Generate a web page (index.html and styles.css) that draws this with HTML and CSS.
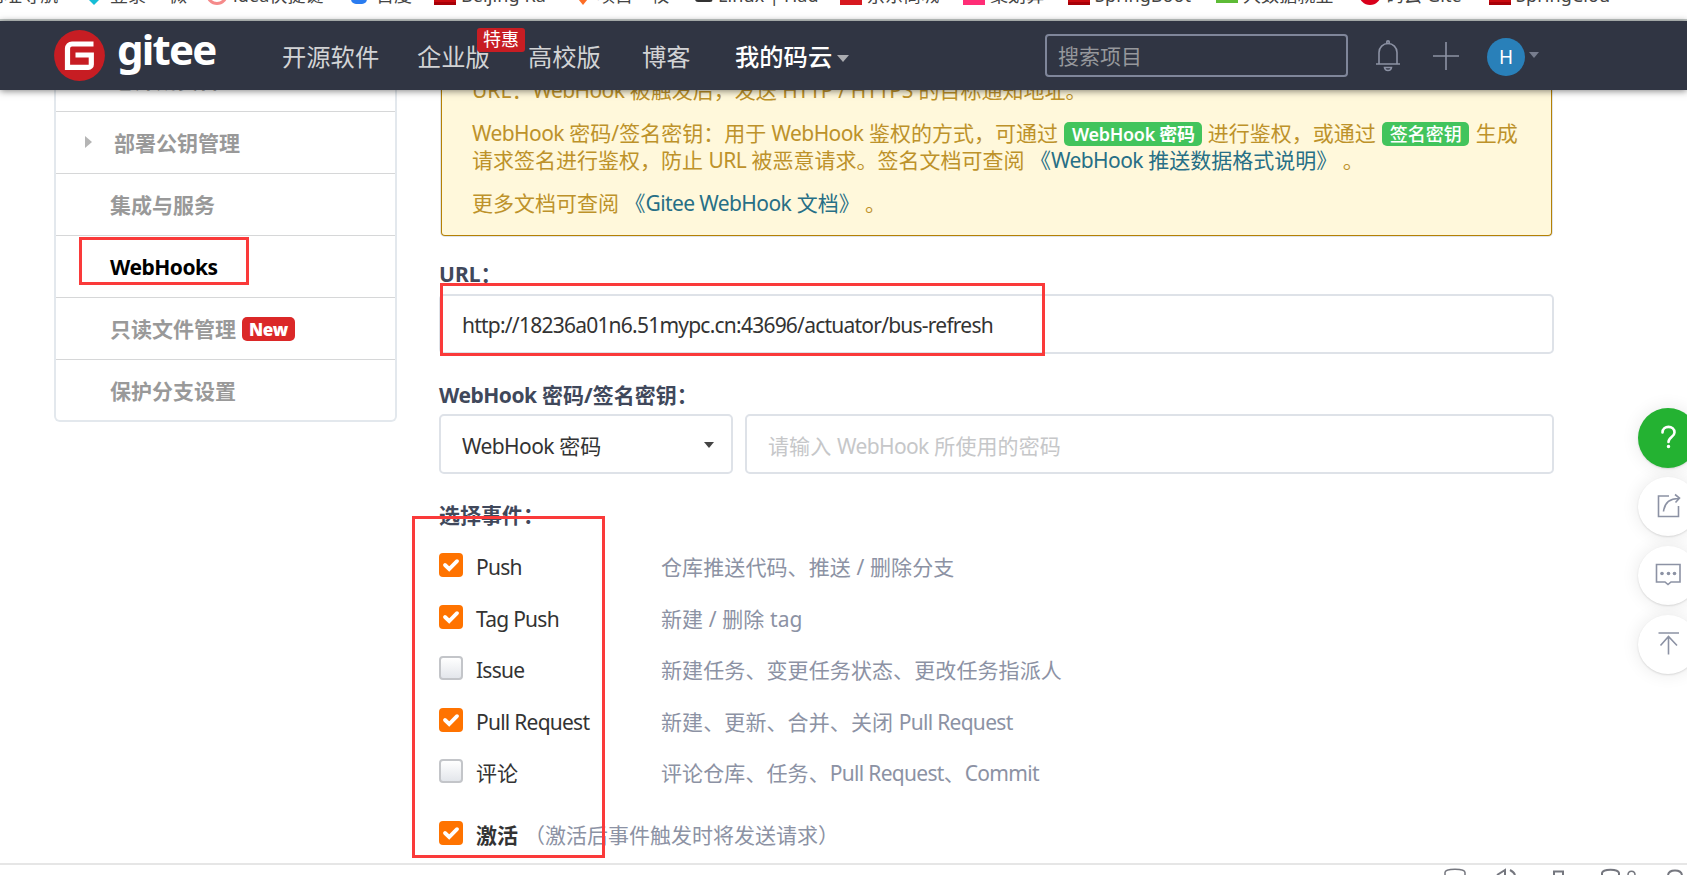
FILE: index.html
```html
<!DOCTYPE html>
<html lang="zh-CN">
<head>
<meta charset="utf-8">
<title>WebHooks - Gitee</title>
<link rel="stylesheet" href="styles.css">
</head>
<body>
<div class="bookmarks">
  <span class="bm"><span>网址导航</span></span>
  <span class="bm"><i class="fav drop"></i><span>登录 一微</span></span>
  <span class="bm"><i class="fav ring"></i><span>idea快捷键</span></span>
  <span class="bm"><i class="fav blue"></i><span>百度</span></span>
  <span class="bm"><i class="fav red"></i><span>Beijing Ra</span></span>
  <span class="bm"><i class="fav fox"></i><span>项目一校</span></span>
  <span class="bm"><i class="fav ink"></i><span>Linux | Had</span></span>
  <span class="bm"><i class="fav jd"></i><span>京东商城</span></span>
  <span class="bm"><i class="fav pink"></i><span>聚划算</span></span>
  <span class="bm"><i class="fav red"></i><span>SpringBoot</span></span>
  <span class="bm"><i class="fav green"></i><span>大数据就业</span></span>
  <span class="bm"><i class="fav round"></i><span>码云 Gite</span></span>
  <span class="bm"><i class="fav red"></i><span>SpringClou</span></span>
</div>

<header class="header">
  <div class="logo">
    <svg width="51" height="51" viewBox="0 0 51 51"><circle cx="25.5" cy="25.5" r="25.4" fill="#c71d23"/><path d="M39.500 14H18a4.500 4.500 0 0 0-4.500 4.500V37.300H34.500a2.800 2.800 0 0 0 2.800-2.800V25H21.500" fill="none" stroke="#fff" stroke-width="5.200"/></svg>
    <span class="brand">gitee</span>
  </div>
  <nav class="nav">
    <a class="n1">开源软件</a>
    <a class="n2">企业版<b class="promo">特惠</b></a>
    <a class="n3">高校版</a>
    <a class="n4">博客</a>
    <a class="n5">我的码云<i class="caret"></i></a>
  </nav>
  <div class="search">搜索项目</div>
  <svg class="bell" width="26" height="32" viewBox="0 0 26 32" fill="none" stroke="#8c92a4" stroke-width="1.600"><path d="M4 24V12.500a9 9 0 0 1 18 0V24M1 24h24M9.500 27.500h7c-.5 4-6.500 4-7 0z"/><circle cx="13" cy="2.200" r="1.300"/></svg>
  <svg class="plus" width="26" height="28" viewBox="0 0 26 28" stroke="#8c92a4" stroke-width="1.600"><path d="M13 0v28M0 14h26"/></svg>
  <span class="avatar">H</span>
  <i class="caret small"></i>
</header>

<main class="main">
  <aside class="side">
    <div class="item first"><span>仓库成员管理</span></div>
    <div class="item sub"><i class="arrow"></i>部署公钥管理</div>
    <div class="item">集成与服务</div>
    <div class="item active"><span class="hooks">WebHooks</span></div>
    <div class="item">只读文件管理<b class="new">New</b></div>
    <div class="item">保护分支设置</div>
  </aside>

  <section class="content">
    <div class="notice">
      <p>URL：<span class="en">WebHook</span> 被触发后，发送 <span class="en2">HTTP / HTTPS</span> 的目标通知地址。</p>
      <p><span class="en">WebHook</span> 密码/签名密钥：用于 <span class="en">WebHook</span> 鉴权的方式，可通过 <b class="tag t1">WebHook 密码</b> 进行鉴权，或通过 <b class="tag t2">签名密钥</b> 生成<br>请求签名进行鉴权，防止 <span class="en">URL</span> 被恶意请求。签名文档可查阅 <a>《<span class="en">WebHook</span> 推送数据格式说明》</a> 。</p>
      <p>更多文档可查阅 <a>《<span class="en">Gitee WebHook</span> 文档》</a> 。</p>
    </div>

    <div class="label l1">URL：</div>
    <div class="field"><span class="url">http://18236a01n6.51mypc.cn:43696/actuator/bus-refresh</span></div>

    <div class="label l2"><span class="enb">WebHook</span> 密码/签名密钥：</div>
    <div class="pair">
      <div class="field select"><span><span class="en">WebHook</span> 密码</span><i class="caret"></i></div>
      <div class="field pass"><span>请输入 <span class="en">WebHook</span> 所使用的密码</span></div>
    </div>

    <div class="label l3">选择事件：</div>
    <div class="events">
      <div class="row"><i class="box on"><svg viewBox="0 0 24 24"><path d="M6 12l4.200 4 7.800-7.800"/></svg></i><span class="name">Push</span><span class="desc">仓库推送代码、推送 / 删除分支</span></div>
      <div class="row"><i class="box on"><svg viewBox="0 0 24 24"><path d="M6 12l4.200 4 7.800-7.800"/></svg></i><span class="name">Tag Push</span><span class="desc">新建 / 删除 tag</span></div>
      <div class="row"><i class="box"></i><span class="name">Issue</span><span class="desc">新建任务、变更任务状态、更改任务指派人</span></div>
      <div class="row"><i class="box on"><svg viewBox="0 0 24 24"><path d="M6 12l4.200 4 7.800-7.800"/></svg></i><span class="name">Pull Request</span><span class="desc">新建、更新、合并、关闭 <span class="en">Pull Request</span></span></div>
      <div class="row"><i class="box"></i><span class="name cn">评论</span><span class="desc">评论仓库、任务、<span class="en">Pull Request</span>、<span class="en">Commit</span></span></div>
      <div class="row last"><i class="box on"><svg viewBox="0 0 24 24"><path d="M6 12l4.200 4 7.800-7.800"/></svg></i><b class="enable">激活</b><span class="hint">（激活后事件触发时将发送请求）</span></div>
    </div>
  </section>
</main>

<footer class="status">
  <svg width="260" height="10" viewBox="0 0 260 10" fill="none" stroke="#75777f" stroke-width="1.500"><path d="M18 10V7.500c0-4.500 20-4.500 20 0V10"/><path d="M70 10l8-5v5M83 5q4 2 5 5" stroke-width="2"/><path d="M127 10V6.500h9V10" stroke-width="2"/><path d="M175 10V8c1-4.500 16-4.500 17 0v2" stroke-width="2"/><path d="M201 10c0-5 7-5 7 0"/><path d="M241 10c1-6 13-6 14 0" stroke-width="2"/></svg>
</footer>

<div class="float">
  <span class="fab help"><svg width="60" height="60" viewBox="0 0 60 60" fill="none" stroke="#fff" stroke-width="2.600" stroke-linecap="round"><path d="M24.500 24.500c0-7.500 12-7.500 12 0 0 4.500-6 4.500-6 9.500"/><circle cx="30.500" cy="38.500" r="1" fill="#fff" stroke-width="1.500"/></svg></span>
  <span class="fab"><svg width="60" height="60" viewBox="0 0 60 60" fill="none" stroke="#8c92a4" stroke-width="1.600"><path d="M31 20H20.500v20.500h20V30M25.500 35.500c1-8 6-13 15-13M37 18.500l4.500 3.500-4 4.500"/></svg></span>
  <span class="fab"><svg width="60" height="60" viewBox="0 0 60 60" fill="none" stroke="#8c92a4" stroke-width="1.600"><path d="M18.500 19.500h23.500V37h-9l-3 2.500-3-2.500h-8.500z"/><g fill="#8c92a4" stroke="none"><circle cx="24" cy="28.500" r="1.800"/><circle cx="30.500" cy="28.500" r="1.800"/><circle cx="36.500" cy="28.500" r="1.800"/></g></svg></span>
  <span class="fab"><svg width="60" height="60" viewBox="0 0 60 60" fill="none" stroke="#8c92a4" stroke-width="1.600"><path d="M20.500 19h20.500M30.500 40.500V23M22.500 31.500l8-9 8.500 9"/></svg></span>
</div>

<div class="mark m1"></div>
<div class="mark m2"></div>
<div class="mark m3"></div>
</body>
</html>
```
FILE: styles.css
```css
* { box-sizing: border-box; }
body {
  margin: 0; width: 1687px; height: 875px; overflow: hidden; position: relative;
  display: flex; flex-direction: column; background: #fff;
  font-family: "Noto Sans", "Noto Sans CJK SC", sans-serif; font-size: 21px; color: #333;
  white-space: nowrap;
}
i { font-style: normal; display: block; flex: none; }

.bookmarks {
  height: 21px; border-bottom: 2px solid #c6ccca; flex: none; overflow: hidden;
  display: grid;
  grid-template-columns: 83px 123px 143px 85px 140px 121px 145px 123px 105px 148px 143px 130px 150px;
  font-size: 18px; line-height: 24px; color: #444;
}
.bm { display: flex; gap: 5px; margin-top: -17px; height: 24px; letter-spacing: .1px; }
.bm:first-child { margin-left: -14px; }
.fav { width: 22px; height: 22px; border-radius: 3px; }
.drop { background: #16bdd6; clip-path: polygon(0 50%, 100% 50%, 50% 100%); }
.ring { border: 3px solid #f58a8a; border-radius: 50%; }
.blue { background: #2a7cf0; border-radius: 0 0 5px 5px; width: 16px; margin: -1px 4px 0 2px; }
.red { background: #c80a0f; border-bottom: 3px solid #a80008; border-radius: 0; }
.fox { background: #fc6d26; clip-path: polygon(0 50%, 100% 50%, 50% 100%); width: 18px; }
.ink { background: #333; width: 18px; height: 19px; clip-path: polygon(0 0, 60% 0, 100% 100%, 0 100%); }
.jd { background: #d71920; border-radius: 0; }
.pink { background: #ff2d76; border-radius: 0; }
.green { background: #5dbb36; border-radius: 0; height: 20px; }
.round { background: #d9001b; border-radius: 50%; }

.header {
  height: 69px; flex: none; background: #303543; display: flex; align-items: center;
  position: relative; z-index: 2; box-shadow: 0 1px 7px rgba(0,0,0,.5);
}
.logo { display: flex; align-items: center; margin-left: 54px; width: 228px; }
.logo svg { flex: none; }
.brand { font: bold 42px/56px "Noto Sans", sans-serif; color: #fff; margin: -13px 0 0 12px; letter-spacing: -1.8px; }
.nav { display: flex; width: 763px; font-size: 24.3px; line-height: 34px; color: #d2d3d5; padding-top: 2px; }
.n1 { width: 135px; }
.n2 { width: 111px; position: relative; }
.n3 { width: 114px; }
.n4 { width: 93px; }
.n5 { color: #fff; display: flex; align-items: center; gap: 5px; font-weight: 500; }
.promo {
  position: absolute; left: 60px; top: -12px; width: 48px; height: 24px; border-radius: 3px;
  background: #c71d23; color: #fff; font-size: 18px; font-weight: 400; line-height: 23px; text-align: center;
}
.caret { border: 6.5px solid transparent; border-top: 7px solid #a9abb0; border-bottom: 0; }
.n5 .caret { margin-top: 4px; }
.caret.small { border-width: 6px 5.5px 0; border-top-color: #777d8e; margin: 0 0 0 4px; position: relative; top: -1px; }
.search {
  width: 303px; height: 43px; border: 2px solid #7f869a; border-radius: 4px;
  color: #96989c; line-height: 40px; padding-left: 11px;
}
.bell { margin-left: 27px; }
.plus { margin-left: 32px; }
.avatar {
  width: 38px; height: 38px; margin: 2px 0 0 28px; border-radius: 50%; background: #2980b9; color: #fff;
  text-align: center; line-height: 38px; font-size: 19px;
}

.main { height: 773px; flex: none; display: flex; align-items: flex-start; overflow: hidden; padding-left: 54px; }
.side { width: 343px; flex: none; border: 2px solid #e3e8ed; border-top: 0; border-radius: 0 0 6px 6px; font-weight: 700; color: #999; }
.item { height: 62px; border-bottom: 1px solid #d6d7d8; padding: 0 0 1px 54px; display: flex; align-items: center; }
.item:last-child { border: 0; height: 60px; }
.first { height: 22px; padding-left: 58px; }
.first span { margin-top: -43px; }
.sub { padding-left: 29px; }
.arrow { border: 6.5px solid transparent; border-left: 7px solid #b5b5b5; border-right: 0; margin: -1px 22px 0 0; }
.active { color: #000; padding-bottom: 0; }
.hooks { letter-spacing: -.5px; }
.new { background: #db2828; color: #fff; border-radius: 5px; width: 53px; height: 24px; line-height: 25px; text-align: center; font-size: 17px; margin: 2px 0 0 6px; letter-spacing: -.2px; }

.content { width: 1115px; margin-left: 42px; flex: none; }
.notice {
  display: flow-root; margin: 0 2px; height: 146px; padding-left: 30px; color: #bd922a; background: #fff8db;
  border: 1px solid #b58105; border-top: 0; border-radius: 0 0 4px 4px; box-shadow: 0 0 0 1px #dfe4ea; line-height: 27px;
}
.notice p { margin: 0 0 16px; }
.notice p:first-child { margin-top: -13px; }
.notice a { color: #276f86; }
.en { letter-spacing: -.6px; }
.en2 { letter-spacing: -.3px; }
.enb { letter-spacing: -.5px; }
.tag { display: inline-block; background: #42c45c; color: #fff; border-radius: 5px; height: 24px; line-height: 24px; font-size: 18px; text-align: center; vertical-align: 0; }
.t1 { width: 138px; font-weight: 600; letter-spacing: -.3px; margin-left: 1px; }
.t2 { width: 87px; font-weight: 500; margin: 0 1px; }

.label { font-weight: 700; color: #40485b; height: 30px; line-height: 30px; }
.l1 { margin-top: 23px; }
.l2, .l3 { margin-top: 26px; }
.field { height: 60px; border: 2px solid #dee2e8; border-radius: 5px; display: flex; align-items: center; padding: 2px 22px 0 21px; }
.l1 + .field { margin-top: 5px; }
.url { letter-spacing: -.77px; }
.pair { display: flex; gap: 12px; margin-top: 4px; }
.select { width: 294px; justify-content: space-between; }
.select .caret { border-width: 6px 5.5px 0; border-top-color: #444; margin-right: -5px; }
.pass { width: 809px; color: #c6c7c9; letter-spacing: .1px; }
.events { padding-top: 23px; }
.row { height: 51.6px; display: flex; align-items: flex-start; line-height: 28px; }
.box { width: 24px; height: 24px; border-radius: 4px; border: 2px solid #c3c5c9; background: linear-gradient(#fff, #e3e6eb); margin-right: 13px; }
.box.on { background: #ff7300; border: 0; }
.box svg { display: block; fill: none; stroke: #fff; stroke-width: 3.8; stroke-linecap: round; }
.name { width: 185px; letter-spacing: -.75px; }
.name.cn { letter-spacing: 0; }
.desc { letter-spacing: .1px; }
.desc .en { letter-spacing: -.7px; }
.desc, .hint { color: #8c92a4; }
.last { padding-top: 10px; height: 62px; }
.enable { width: 48px; }

.status { height: 12px; flex: none; border-top: 2px solid #e6e6e6; background: #fff; overflow: hidden; position: relative; }
.status svg { display: block; margin-left: 1427px; }

.float { position: absolute; left: 1638px; top: 408px; display: flex; flex-direction: column; gap: 9px; }
.fab { width: 60px; height: 60px; border-radius: 50%; background: #fff; box-shadow: 0 1px 2px rgba(0,0,0,.12), 0 0 18px rgba(0,0,0,.09); }
.fab + .fab { height: 59px; margin-bottom: 1px; }
.fab svg { display: block; margin-top: -1px; }
.help { background: #24b232; }
.help svg { margin-top: 0; }

.mark { position: absolute; border: 3px solid #fa3a3a; z-index: 3; }
.m1 { left: 79px; top: 237px; width: 170px; height: 48px; }
.m2 { left: 440px; top: 283px; width: 605px; height: 73px; }
.m3 { left: 412px; top: 516px; width: 193px; height: 342px; }
```
